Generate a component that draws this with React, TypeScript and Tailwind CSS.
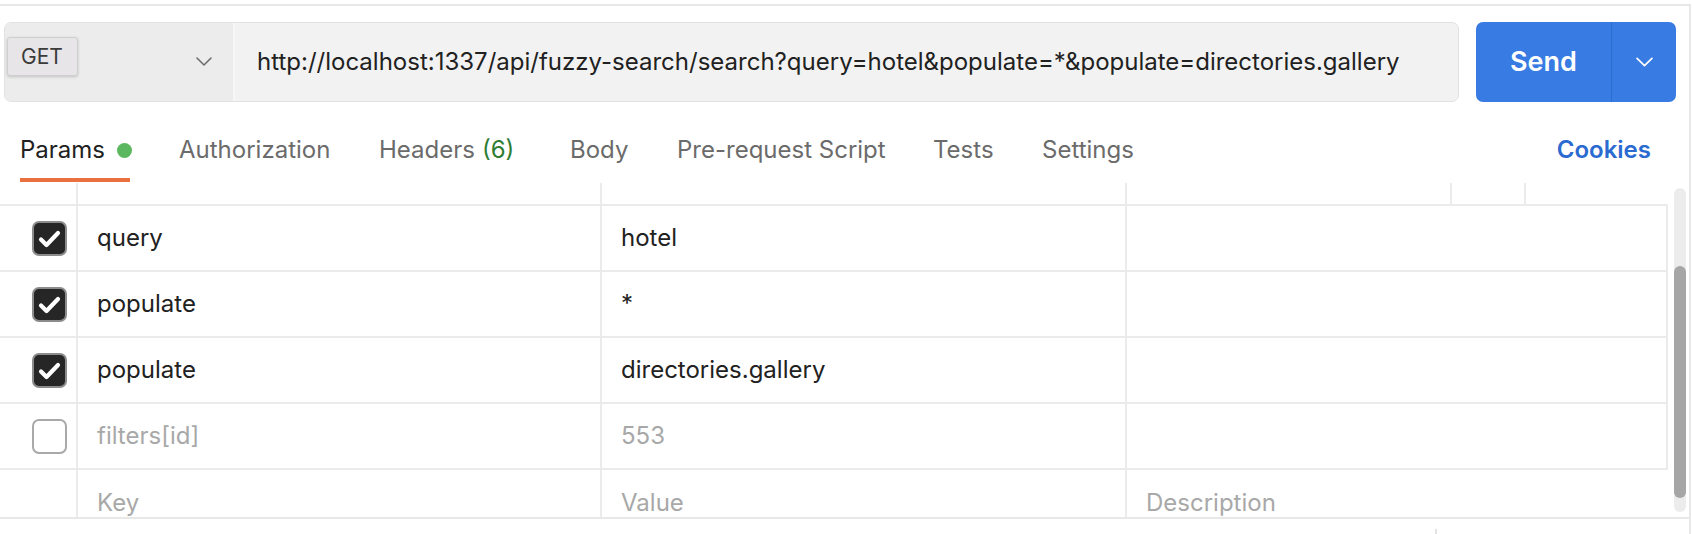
import { Fragment } from "react"

const params = [
  { key: "query", value: "hotel", checked: true },
  { key: "populate", value: "*", checked: true },
  { key: "populate", value: "directories.gallery", checked: true },
  { key: "filters[id]", value: "553", checked: false },
]

const tabs = [
  { label: "Params", w: "w-[159px]", active: true },
  { label: "Authorization", w: "w-[200px]" },
  { label: "Headers", w: "w-[191px]", count: "(6)" },
  { label: "Body", w: "w-[107px]" },
  { label: "Pre-request Script", w: "w-[256px]" },
  { label: "Tests", w: "w-[109px]" },
  { label: "Settings", w: "w-[120px]" },
]

function Chevron({ className, stroke }: { className: string; stroke: string }) {
  return (
    <svg viewBox="0 0 16 9" className={className} fill="none">
      <path d="M1 1l7 7 7-7" stroke={stroke} strokeWidth="1.6" strokeLinecap="round" strokeLinejoin="round" />
    </svg>
  )
}

function Checkbox({ checked }: { checked: boolean }) {
  if (!checked) {
    return <div className="w-[35px] h-[35px] rounded-[7px] border-2 border-[#a9a9a9] bg-white" />
  }
  return (
    <div className="w-[35px] h-[35px] rounded-[7px] border-2 border-[#8c8c8c] bg-[#262626] flex items-center justify-center">
      <svg viewBox="0 0 31 31" className="w-[31px] h-[31px]" fill="none">
        <path d="M7 16.5l5.5 5.5L24 10" stroke="white" strokeWidth="4.2" strokeLinecap="round" strokeLinejoin="round" />
      </svg>
    </div>
  )
}

export default function App() {
  return (
    <div className="w-[1692px] h-[534px] bg-white overflow-hidden font-[Inter,'Noto_Sans',sans-serif] text-[#212121]">
      <div className="mt-[4px] w-[1691px] h-[530px] border-t-2 border-r-2 border-[#e8e8e8] flex flex-col">
        {/* request bar */}
        <div className="mt-[16px] h-[80px] pl-[4px] flex">
          <div className="w-[1455px] h-[80px] flex border border-[#e2e2e2] rounded-[7px] overflow-hidden bg-[#f2f2f2]">
            <div className="w-[230px] h-full bg-[#ececec] border-r-2 border-[#f6f6f6] flex items-start justify-between">
              <div className="ml-[2px] mt-[14px] w-[71px] h-[39px] rounded-[3px] border border-[#cfcfcf] bg-[#e7e5e7] shadow-[0_1px_3px_rgba(0,0,0,0.18)] flex items-center pl-[13px] text-[21px] text-[#3b3b3b]">
                GET
              </div>
              <Chevron className="mt-[34px] mr-[21px] w-[16px] h-[9px]" stroke="#6e6e6e" />
            </div>
            <div className="flex-1 flex items-center pl-[22px] text-[24px] whitespace-nowrap">
              http://localhost:1337/api/fuzzy-search/search?query=hotel&amp;populate=*&amp;populate=directories.gallery
            </div>
          </div>
          <div className="ml-[17px] w-[200px] h-[80px] rounded-[7px] bg-[#377be3] flex overflow-hidden">
            <div className="w-[135px] h-full flex items-center justify-center text-white font-semibold text-[27px]">
              Send
            </div>
            <div className="w-[1px] h-full bg-[#2d6ccf]" />
            <div className="flex-1 h-full flex items-center justify-center">
              <Chevron className="w-[17px] h-[10px]" stroke="white" />
            </div>
          </div>
        </div>

        {/* tabs */}
        <div className="h-[81px] pt-[34px] pl-[20px] flex text-[24px] leading-[28px]">
          {tabs.map((t) => (
            <div key={t.label} className={`${t.w} flex flex-col`}>
              <div className={`h-[28px] flex items-center whitespace-nowrap ${t.active ? "text-[#212121]" : "text-[#6b6b6b]"}`}>
                {t.label}
                {t.count && <span className="ml-[7px] text-[#2f7d33]">{t.count}</span>}
                {t.active && <span className="ml-[12px] w-[15px] h-[15px] rounded-full bg-[#5cb85f]" />}
              </div>
              {t.active && <div className="mt-[14px] w-[110px] h-[4px] bg-[#e9703f]" />}
            </div>
          ))}
          <div className="ml-auto mr-[38px] h-[28px] font-semibold text-[#2b6bd1]">Cookies</div>
        </div>

        {/* params table */}
        <div className="relative h-[336px] border-b-2 border-[#e8e8e8] overflow-hidden text-[24px]">
          <div className="w-[1668px] h-[23px] flex border-b-2 border-[#ebebeb]">
            <div className="w-[78px] border-r-2 border-[#ebebeb]" />
            <div className="w-[524px] border-r-2 border-[#ebebeb]" />
            <div className="w-[525px] border-r-2 border-[#ebebeb]" />
            <div className="w-[325px] border-r-2 border-[#ebebeb]" />
            <div className="w-[74px] border-r-2 border-[#ebebeb]" />
          </div>
          {params.map((p, i) => (
            <Fragment key={i}>
              <div className="w-[1668px] h-[66px] flex border-b-2 border-[#ebebeb]">
                <div className="w-[78px] border-r-2 border-[#ebebeb] flex items-center pl-[32px]">
                  <Checkbox checked={p.checked} />
                </div>
                <div className={`w-[524px] border-r-2 border-[#ebebeb] flex items-center pl-[19px] ${p.checked ? "" : "text-[#a8a8a8]"}`}>
                  {p.key}
                </div>
                <div className={`w-[525px] border-r-2 border-[#ebebeb] flex items-center pl-[19px] ${p.checked ? "" : "text-[#a8a8a8]"}`}>
                  {p.value}
                </div>
                <div className="w-[541px] border-r-2 border-[#ebebeb]" />
              </div>
            </Fragment>
          ))}
          <div className="w-[1668px] h-[66px] flex text-[#a8a8a8]">
            <div className="w-[78px] border-r-2 border-[#ebebeb]" />
            <div className="w-[524px] border-r-2 border-[#ebebeb] flex items-center pl-[19px]">Key</div>
            <div className="w-[525px] border-r-2 border-[#ebebeb] flex items-center pl-[19px]">Value</div>
            <div className="w-[541px] flex items-center pl-[19px]">Description</div>
          </div>

          {/* scrollbar */}
          <div className="absolute left-[1674px] top-[5px] w-[12px] h-[324px] rounded-full bg-[#ececec]">
            <div className="mt-[78px] w-[12px] h-[232px] rounded-full bg-[#a6a6a6]" />
          </div>
        </div>

        <div className="flex-1 flex items-end">
          <div className="ml-[1435px] w-[2px] h-[5px] bg-[#e4e4e4]" />
        </div>
      </div>
    </div>
  )
}
